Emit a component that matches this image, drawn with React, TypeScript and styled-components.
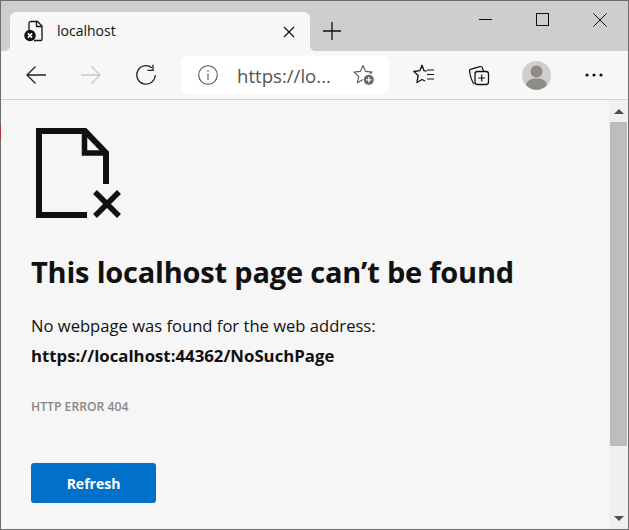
import React from 'react';
import styled, {createGlobalStyle} from 'styled-components';

const GlobalStyle = createGlobalStyle`
  html, body {
    margin: 0;
    padding: 0;
    width: 629px;
    height: 530px;
    overflow: hidden;
    background: #f6f6f6;
  }

  * {
    box-sizing: border-box;
  }
`;

export default function App() {
    return (
        <Window>
            <GlobalStyle/>
            <FrameMark/>
            <TitleBar>
                <Tab>
                    <TabIcon width="20" height="22" viewBox="0 0 20 22" fill="none">
                        <path d="M12 1.500h1.500l4.500 4.500v13.200a1.300 1.300 0 0 1-1.300 1.300H10" stroke="#111" strokeWidth="1.300"/>
                        <path d="M12.500 1.500v5h5.500" stroke="#111" strokeWidth="1.300"/>
                        <path d="M13 1.500H7a2 2 0 0 0-2 2V10" stroke="#111" strokeWidth="1.300"/>
                        <circle cx="6" cy="15.500" r="5.700" fill="#111"/>
                        <path d="M3.900 13.400l4.200 4.200M8.100 13.400l-4.200 4.200" stroke="#fff" strokeWidth="1.500"/>
                    </TabIcon>
                    <TabTitle>localhost</TabTitle>
                    <TabClose width="12" height="12" viewBox="0 0 12 12">
                        <path d="M1 1l10 10M11 1L1 11" stroke="#111" strokeWidth="1.200"/>
                    </TabClose>
                </Tab>
                <NewTab width="18" height="18" viewBox="0 0 18 18">
                    <path d="M9 0v18M0 9h18" stroke="#111" strokeWidth="1.300"/>
                </NewTab>
                <WindowControls>
                    <svg width="14" height="14" viewBox="0 0 14 14">
                        <path d="M0 6.500h13" stroke="#111" strokeWidth="1"/>
                    </svg>
                    <svg width="14" height="14" viewBox="0 0 14 14">
                        <rect x="0.500" y="0.500" width="12" height="12" fill="none" stroke="#111" strokeWidth="1"/>
                    </svg>
                    <svg width="14" height="14" viewBox="0 0 14 14">
                        <path d="M0.500 0.500l13 13M13.500 0.500l-13 13" stroke="#111" strokeWidth="1"/>
                    </svg>
                </WindowControls>
            </TitleBar>
            <Toolbar>
                <NavIcon width="20" height="20" viewBox="0 0 20 20" fill="none">
                    <path d="M20 10H1M9.500 1.500L1 10l8.500 8.500" stroke="#222" strokeWidth="1.300"/>
                </NavIcon>
                <NavIcon $gap={35} width="20" height="20" viewBox="0 0 20 20" fill="none">
                    <path d="M0 10h19M10.500 1.500L19 10l-8.500 8.500" stroke="#c9c9c9" strokeWidth="1.300"/>
                </NavIcon>
                <NavIcon $gap={35} width="20" height="22" viewBox="0 0 20 22" fill="none">
                    <path d="M15.800 3.800A9.200 9.200 0 1 0 19.200 11" stroke="#222" strokeWidth="1.300"/>
                    <path d="M17 0.800v5.500h-5.500" stroke="#222" strokeWidth="1.300"/>
                </NavIcon>
                <AddressBar>
                    <svg width="20" height="20" viewBox="0 0 20 20" fill="none">
                        <circle cx="10" cy="10" r="9.300" stroke="#555" strokeWidth="1.100"/>
                        <path d="M10 8.500v6.500" stroke="#555" strokeWidth="1.100"/>
                        <circle cx="10" cy="6" r="0.800" fill="#555"/>
                    </svg>
                    <AddressText>https://lo...</AddressText>
                    <svg width="22" height="22" viewBox="0 0 22 22" fill="none">
                        <path d="M10 1.500L12.600 7.400L19 8.100L14.300 12.400L15.600 18.700L10 15.500L4.400 18.700L5.700 12.400L1 8.100L7.400 7.400Z" stroke="#555" strokeWidth="1.100" strokeLinejoin="round"/>
                        <circle cx="15.800" cy="15.800" r="5.500" fill="#666" stroke="#fff" strokeWidth="1"/>
                        <path d="M15.800 13v5.600M13 15.800h5.600" stroke="#fff" strokeWidth="1.300"/>
                    </svg>
                </AddressBar>
                <ToolIcons>
                    <svg width="22" height="22" viewBox="0 0 22 22" fill="none">
                        <path d="M13.500 7L11 6.700L9 1.200L6.900 6.700L0.800 7.500L5.200 11.400L3.900 18.500L9 15.500L12 17" stroke="#111" strokeWidth="1.300" strokeLinejoin="round"/>
                        <path d="M14 6h7M14 10.500h7M14 15h7" stroke="#111" strokeWidth="1.200"/>
                    </svg>
                    <CollectionsIcon width="22" height="22" viewBox="0 0 22 22" fill="none">
                        <path d="M6 20C4 18 2 11 1.600 7.500A2 2 0 0 1 3.200 5.200L12 2.600a2 2 0 0 1 2.400 1.200L15.500 7" stroke="#111" strokeWidth="1.200"/>
                        <rect x="7" y="7.500" width="13.500" height="13" rx="2.500" fill="#f7f7f7" stroke="#111" strokeWidth="1.300"/>
                        <path d="M13.700 10.500v7M10.200 14h7" stroke="#111" strokeWidth="1.200"/>
                    </CollectionsIcon>
                    <Avatar width="29" height="29" viewBox="0 0 29 29">
                        <circle cx="14.500" cy="14.500" r="14.500" fill="#d0cecc"/>
                        <circle cx="14.500" cy="10.500" r="6" fill="#8f8b87"/>
                        <path d="M4 24c1-5 5-6.500 10.500-6.500S24 19 25 24a14 14 0 0 1-21 0z" fill="#8f8b87"/>
                    </Avatar>
                    <svg width="18" height="4" viewBox="0 0 18 4">
                        <circle cx="2" cy="2" r="1.600" fill="#111"/>
                        <circle cx="9" cy="2" r="1.600" fill="#111"/>
                        <circle cx="16" cy="2" r="1.600" fill="#111"/>
                    </svg>
                </ToolIcons>
            </Toolbar>
            <Viewport>
                <Page>
                    <ErrorIcon width="86" height="92" viewBox="0 0 86 92" fill="none">
                        <path d="M51 87H3V3h46l21 22v31" stroke="#111" strokeWidth="6"/>
                        <path d="M48.500 3v22H70" stroke="#111" strokeWidth="5.500"/>
                        <path d="M59 64l24 24M83 64L59 88" stroke="#111" strokeWidth="5.500"/>
                    </ErrorIcon>
                    <Heading>This localhost page can’t be found</Heading>
                    <Message>No webpage was found for the web address:</Message>
                    <Url>https://localhost:44362/NoSuchPage</Url>
                    <ErrorCode>HTTP ERROR 404</ErrorCode>
                    <RefreshButton>Refresh</RefreshButton>
                </Page>
                <Scrollbar>
                    <ScrollArrow $up/>
                    <ScrollThumb/>
                    <ScrollArrow/>
                </Scrollbar>
            </Viewport>
        </Window>
    );
}

const Window = styled.div`
  position: relative;
  display: flex;
  flex-direction: column;
  width: 629px;
  height: 530px;
  border: 1px solid #6e6e6e;
  font-family: "Open Sans", "Noto Sans", sans-serif;
  background: #f6f6f6;
`;

const FrameMark = styled.div`
  position: absolute;
  left: -1px;
  top: 125px;
  width: 1px;
  height: 13px;
  background: #a5343f;
`;

const TitleBar = styled.div`
  display: flex;
  align-items: flex-end;
  height: 50px;
  padding-left: 9px;
  background: #cecece;
`;

const Tab = styled.div`
  position: relative;
  display: flex;
  align-items: center;
  width: 300px;
  height: 39px;
  padding: 0 15px 0 14px;
  background: #f7f7f7;
  border-radius: 6px 6px 0 0;

  &::before, &::after {
    content: '';
    position: absolute;
    bottom: 0;
    width: 6px;
    height: 6px;
  }

  &::before {
    left: -6px;
    background: radial-gradient(circle at 0 0, transparent 6px, #f7f7f7 6.5px);
  }

  &::after {
    right: -6px;
    background: radial-gradient(circle at 100% 0, transparent 6px, #f7f7f7 6.5px);
  }
`;

const TabIcon = styled.svg`
  flex: none;
  margin-top: -1px;
`;

const TabTitle = styled.span`
  flex: 1;
  margin-left: 13px;
  margin-top: -3px;
  font-size: 14px;
  color: #111;
`;

const TabClose = styled.svg`
  flex: none;
  margin-top: 1px;
`;

const NewTab = styled.svg`
  flex: none;
  margin: 0 0 11px 13px;
`;

const WindowControls = styled.div`
  display: flex;
  gap: 43px;
  margin-left: auto;
  align-self: flex-start;
  padding: 12px 21px 0 0;
`;

const Toolbar = styled.div`
  display: flex;
  align-items: center;
  height: 49px;
  padding-left: 25px;
  background: #f7f7f7;
  border-bottom: 1px solid #d2d2d2;
`;

const NavIcon = styled.svg<{$gap?: number}>`
  flex: none;
  margin-left: ${(p) => p.$gap || 0}px;
`;

const AddressBar = styled.div`
  display: flex;
  align-items: center;
  width: 208px;
  height: 38px;
  margin-left: 25px;
  padding: 0 14px 0 17px;
  background: #fff;
  border-radius: 6px;
`;

const AddressText = styled.span`
  flex: 1;
  margin-left: 19px;
  font-size: 18.6px;
  color: #555;
  white-space: nowrap;
`;

const ToolIcons = styled.div`
  display: flex;
  align-items: center;
  margin-left: 24px;
  gap: 32px;
`;

const CollectionsIcon = styled.svg`
  margin-left: 1px;
`;

const Avatar = styled.svg`
  margin-right: 2px;
`;

const Viewport = styled.div`
  flex: 1;
  display: flex;
  min-height: 0;
`;

const Page = styled.div`
  flex: 1;
  display: flex;
  flex-direction: column;
  align-items: flex-start;
  padding: 28px 0 0 30px;
  color: #111;
`;

const ErrorIcon = styled.svg`
  flex: none;
  margin-left: 5px;
`;

const Heading = styled.h1`
  margin: 33px 0 0;
  font-size: 29px;
  line-height: 38px;
  font-weight: 700;
  letter-spacing: -0.2px;
  white-space: nowrap;
`;

const Message = styled.p`
  margin: 23px 0 0;
  font-size: 16.6px;
  line-height: 24px;
  white-space: nowrap;
`;

const Url = styled.p`
  margin: 6px 0 0;
  font-size: 16.8px;
  line-height: 24px;
  font-weight: 700;
  white-space: nowrap;
`;

const ErrorCode = styled.p`
  margin: 31px 0 0;
  font-size: 12.2px;
  line-height: 16px;
  font-weight: 600;
  color: #8a8886;
`;

const RefreshButton = styled.button`
  width: 125px;
  height: 40px;
  margin-top: 48px;
  padding: 0;
  border: 0;
  border-radius: 3px;
  background: #0070c9;
  color: #fff;
  font: 700 14px "Open Sans", "Noto Sans", sans-serif;
`;

const Scrollbar = styled.div`
  flex: none;
  display: flex;
  flex-direction: column;
  align-items: center;
  width: 19px;
  background: #f0f0f0;
`;

const ScrollArrow = styled.div<{$up?: boolean}>`
  flex: none;
  width: 0;
  height: 0;
  margin: ${(p) => (p.$up ? '9px 0 8px' : 'auto 0 8px')};
  border-left: 5px solid transparent;
  border-right: 5px solid transparent;
  border-bottom: ${(p) => (p.$up ? '5px solid #505050' : '0')};
  border-top: ${(p) => (p.$up ? '0' : '5px solid #505050')};
`;

const ScrollThumb = styled.div`
  flex: none;
  width: 17px;
  height: 324px;
  background: #bdbdbd;
`;
